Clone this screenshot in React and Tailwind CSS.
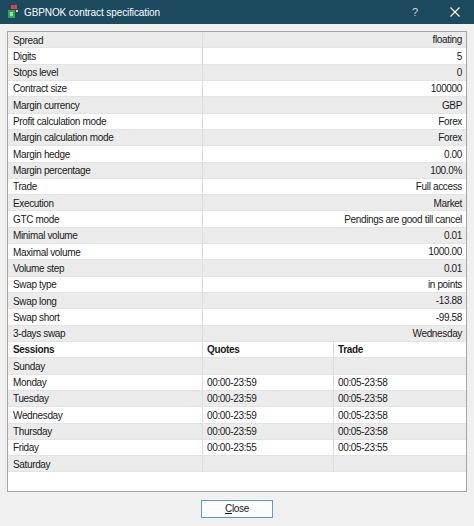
import React from 'react';

const specs = [
  ['Spread', 'floating'],
  ['Digits', '5'],
  ['Stops level', '0'],
  ['Contract size', '100000'],
  ['Margin currency', 'GBP'],
  ['Profit calculation mode', 'Forex'],
  ['Margin calculation mode', 'Forex'],
  ['Margin hedge', '0.00'],
  ['Margin percentage', '100.0%'],
  ['Trade', 'Full access'],
  ['Execution', 'Market'],
  ['GTC mode', 'Pendings are good till cancel'],
  ['Minimal volume', '0.01'],
  ['Maximal volume', '1000.00'],
  ['Volume step', '0.01'],
  ['Swap type', 'in points'],
  ['Swap long', '-13.88'],
  ['Swap short', '-99.58'],
  ['3-days swap', 'Wednesday'],
];

const sessions = [
  ['Sunday', '', ''],
  ['Monday', '00:00-23:59', '00:05-23:58'],
  ['Tuesday', '00:00-23:59', '00:05-23:58'],
  ['Wednesday', '00:00-23:59', '00:05-23:58'],
  ['Thursday', '00:00-23:59', '00:05-23:58'],
  ['Friday', '00:00-23:55', '00:05-23:55'],
  ['Saturday', '', ''],
];

function AppIcon() {
  return (
    <svg width="12" height="14" viewBox="0 0 12 14">
      <rect x="4" y="0" width="6" height="4" fill="#e04040" />
      <rect x="1" y="5" width="7" height="8" fill="#2ea84a" />
      <rect x="3" y="7" width="3" height="4" fill="#8fe0a0" />
      <rect x="9" y="5" width="2" height="2" fill="#d0d0d0" />
    </svg>
  );
}

export default function App() {
  return (
    <div
      className="flex h-[526px] w-[474px] flex-col bg-[#f0f0f0] text-[10px] tracking-[-0.35px] text-[#1a1a1a]"
      style={{ fontFamily: '"Liberation Sans", Arial, sans-serif' }}
    >
      {/* title bar */}
      <div className="flex h-[24px] items-center bg-[#1c4a5e] text-white">
        <div className="ml-[7px] mr-[5px] flex items-center">
          <AppIcon />
        </div>
        <span className="text-[10px] tracking-[-0.1px]">GBPNOK contract specification</span>
        <span className="ml-auto mr-[32px] text-[11px] tracking-normal text-[#c8d4da]">?</span>
        <svg width="10" height="10" viewBox="0 0 10 10" className="mr-[14px]">
          <path d="M0.5 0.5 L9.5 9.5 M9.5 0.5 L0.5 9.5" stroke="#ffffff" strokeWidth="1.1" />
        </svg>
      </div>

      {/* table panel */}
      <div className="mx-[7px] mt-[7px] flex h-[461px] flex-col border border-[#a6a6a6] bg-white">
        {specs.map(([k, v], i) => (
          <div
            key={k}
            className={`flex h-[16.32px] items-center border-b border-[#e3e3e3] ${i % 2 === 0 ? 'bg-[#ebebeb]' : 'bg-white'}`}
          >
            <div className="w-[195px] shrink-0 self-stretch border-r border-[#dcdcdc] pl-[5px] pt-[0.5px] leading-[15px]">{k}</div>
            <div className="flex-1 pr-[4px] pt-[0.5px] text-right leading-[15px]">{v}</div>
          </div>
        ))}
        <div className="flex h-[16.32px] items-center border-b border-[#e3e3e3] bg-white font-bold">
          <div className="w-[195px] shrink-0 self-stretch border-r border-[#dcdcdc] pl-[5px] pt-[0.5px] leading-[15px]">Sessions</div>
          <div className="w-[131px] shrink-0 self-stretch border-r border-[#dcdcdc] pl-[4px] pt-[0.5px] leading-[15px]">Quotes</div>
          <div className="flex-1 pl-[4px] pt-[0.5px] leading-[15px]">Trade</div>
        </div>
        {sessions.map(([d, q, t], i) => (
          <div
            key={d}
            className={`flex h-[16.32px] items-center border-b border-[#e3e3e3] ${i % 2 === 0 ? 'bg-[#ebebeb]' : 'bg-white'}`}
          >
            <div className="w-[195px] shrink-0 self-stretch border-r border-[#dcdcdc] pl-[5px] pt-[0.5px] leading-[15px]">{d}</div>
            <div className="w-[131px] shrink-0 self-stretch border-r border-[#dcdcdc] pl-[4px] pt-[0.5px] leading-[15px]">{q}</div>
            <div className="flex-1 pl-[4px] pt-[0.5px] leading-[15px]">{t}</div>
          </div>
        ))}
      </div>

      {/* footer */}
      <div className="flex flex-1 items-start justify-center pt-[8px]">
        <button className="h-[18px] w-[72px] border border-[#5a9ad6] bg-[#fdfdfd] text-[10px] leading-[16px] text-[#1a1a1a]">
          <span className="underline">C</span>lose
        </button>
      </div>
    </div>
  );
}
